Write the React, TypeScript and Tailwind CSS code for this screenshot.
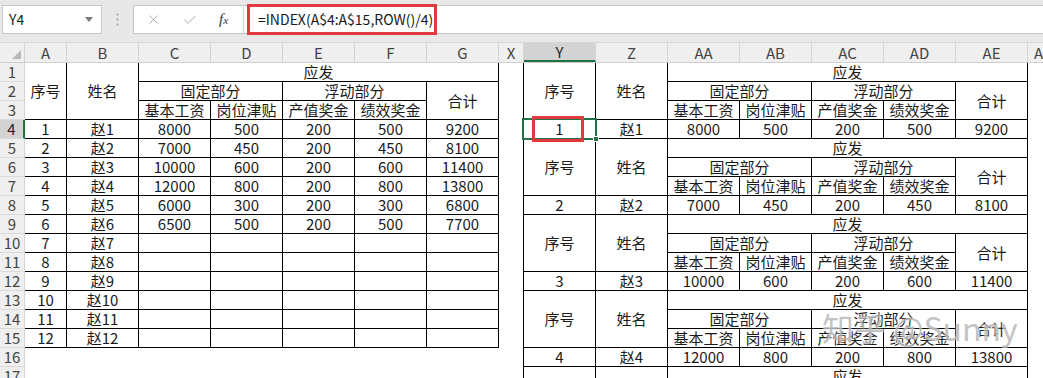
import { X, Check } from "lucide-react";

const FONT = "font-['Noto_Sans_CJK_SC','Noto_Sans',sans-serif]";

type Row = string[];

const DATA: Row[] = [
  ["1", "赵1", "8000", "500", "200", "500", "9200"],
  ["2", "赵2", "7000", "450", "200", "450", "8100"],
  ["3", "赵3", "10000", "600", "200", "600", "11400"],
  ["4", "赵4", "12000", "800", "200", "800", "13800"],
  ["5", "赵5", "6000", "300", "200", "300", "6800"],
  ["6", "赵6", "6500", "500", "200", "500", "7700"],
  ["7", "赵7"],
  ["8", "赵8"],
  ["9", "赵9"],
  ["10", "赵10"],
  ["11", "赵11"],
  ["12", "赵12"],
];

const COL_HEADS = [
  { label: "A", w: "w-[42px]" },
  { label: "B", w: "w-[72px]" },
  { label: "C", w: "w-[72px]" },
  { label: "D", w: "w-[72px]" },
  { label: "E", w: "w-[72px]" },
  { label: "F", w: "w-[72px]" },
  { label: "G", w: "w-[72px]" },
  { label: "X", w: "w-[25px]" },
  { label: "Y", w: "w-[72px]", sel: true },
  { label: "Z", w: "w-[72px]" },
  { label: "AA", w: "w-[72px]" },
  { label: "AB", w: "w-[72px]" },
  { label: "AC", w: "w-[72px]" },
  { label: "AD", w: "w-[72px]" },
  { label: "AE", w: "w-[72px]" },
];

function Cell({ className = "", children }: { className?: string; children?: React.ReactNode }) {
  return (
    <div className={`flex shrink-0 items-center justify-center border-r border-b border-black text-[15px] leading-[18px] text-[#1a1a1a] ${className}`}>
      {children}
    </div>
  );
}

function HeaderBlock({ first }: { first: string }) {
  return (
    <div className="flex">
      <Cell className={`${first} h-[57px]`}>序号</Cell>
      <Cell className="w-[72px] h-[57px]">姓名</Cell>
      <div className="flex flex-col">
        <Cell className="w-[360px] h-[19px]">应发</Cell>
        <div className="flex">
          <div className="flex flex-col">
            <Cell className="w-[144px] h-[19px]">固定部分</Cell>
            <div className="flex">
              <Cell className="w-[72px] h-[19px]">基本工资</Cell>
              <Cell className="w-[72px] h-[19px]">岗位津贴</Cell>
            </div>
          </div>
          <div className="flex flex-col">
            <Cell className="w-[144px] h-[19px]">浮动部分</Cell>
            <div className="flex">
              <Cell className="w-[72px] h-[19px]">产值奖金</Cell>
              <Cell className="w-[72px] h-[19px]">绩效奖金</Cell>
            </div>
          </div>
          <Cell className="w-[72px] h-[38px]">合计</Cell>
        </div>
      </div>
    </div>
  );
}

function DataRow({ row, first }: { row: Row; first: string }) {
  return (
    <div className="flex">
      <Cell className={`${first} h-[19px]`}>{row[0]}</Cell>
      {[1, 2, 3, 4, 5, 6].map((i) => (
        <Cell key={i} className="w-[72px] h-[19px]">{row[i] ?? ""}</Cell>
      ))}
    </div>
  );
}

function Toolbar() {
  return (
    <div className="h-[43px] bg-[#e8e8e8] pt-[5px] border-b border-[#d6d6d6]">
      <div className="flex h-[29px] items-stretch">
        <div className="ml-[2px] flex w-[100px] items-center justify-between border border-[#c6c6c6] bg-white pl-[6px] pr-[8px]">
          <span className="text-[14px] text-[#222]">Y4</span>
          <svg width="8" height="5" viewBox="0 0 8 5"><polygon points="0,0 8,0 4,5" fill="#7a7a7a" /></svg>
        </div>
        <div className="flex w-[31px] items-center justify-center">
          <svg width="3" height="13" viewBox="0 0 3 13">
            <circle cx="1.5" cy="1.5" r="1.2" fill="#b3b3b3" />
            <circle cx="1.5" cy="6.5" r="1.2" fill="#b3b3b3" />
            <circle cx="1.5" cy="11.5" r="1.2" fill="#b3b3b3" />
          </svg>
        </div>
        <div className="flex flex-1 items-center border border-r-0 border-[#c6c6c6] bg-white">
          <div className="flex w-[110px] items-center border-r border-[#d9d9d9] h-full">
            <X size={15} strokeWidth={1.4} className="ml-[12px] text-[#a3a3a3]" />
            <Check size={16} strokeWidth={1.4} className="ml-[21px] text-[#a3a3a3]" />
            <span className="ml-[21px] font-['Liberation_Serif',serif] text-[15px] italic text-[#333]">
              f<span className="text-[11px]">x</span>
            </span>
          </div>
          <div className="ml-[3px] -my-[3px] flex h-[31px] w-[190px] items-center border-[3px] border-[#e0393e] pl-[8px] text-[14px] text-[#1a1a1a]">
            =INDEX(A$4:A$15,ROW()/4)
          </div>
        </div>
      </div>
    </div>
  );
}

function ColumnHeader() {
  return (
    <div className="flex h-[20px] border-b border-[#cfcfcf] bg-[#efefef] text-[15px] leading-[18px] text-[#444]">
      <div className="flex w-[25px] shrink-0 items-end justify-end border-r border-[#d4d4d4] pb-[3px] pr-[3px]">
        <svg width="9" height="9" viewBox="0 0 9 9"><polygon points="9,0 9,9 0,9" fill="#b9b9b9" /></svg>
      </div>
      {COL_HEADS.map((c, i) => (
        <div
          key={i}
          className={`flex shrink-0 items-center justify-center border-r border-[#d4d4d4] ${c.w} ${c.sel ? "bg-[#d3d3d3] border-b-2 border-b-[#217346] text-[#222]" : ""}`}
        >
          {c.label}
        </div>
      ))}
      <div className="flex flex-1 items-center pl-[6px]">AF</div>
    </div>
  );
}

function RowHeader() {
  return (
    <div className="flex w-[25px] shrink-0 flex-col bg-[#efefef] text-[15px] leading-[18px] text-[#444]">
      {Array.from({ length: 17 }, (_, i) => (
        <div
          key={i}
          className={`flex h-[19px] shrink-0 items-center justify-center border-b border-[#dadada] ${i === 3 ? "bg-[#d3d3d3] border-r-2 border-r-[#217346] text-[#222]" : "border-r border-r-[#d4d4d4]"}`}
        >
          {i + 1}
        </div>
      ))}
    </div>
  );
}

export default function App() {
  return (
    <div className={`relative h-[378px] w-[1043px] overflow-hidden bg-white ${FONT}`}>
      <Toolbar />
      <ColumnHeader />
      <div className="flex">
        <RowHeader />

        {/* left source table */}
        <div className="flex w-[474px] shrink-0 flex-col">
          <HeaderBlock first="w-[42px]" />
          {DATA.map((r) => (
            <DataRow key={r[0]} row={r} first="w-[42px]" />
          ))}
        </div>

        <div className="w-[24px] shrink-0" />

        {/* right generated table */}
        <div className="flex w-[505px] shrink-0 flex-col border-l border-black">
          {DATA.slice(0, 4).map((r) => (
            <div key={r[0]} className="flex flex-col">
              <HeaderBlock first="w-[72px]" />
              <DataRow row={r} first="w-[72px]" />
            </div>
          ))}
          <HeaderBlock first="w-[72px]" />
        </div>
      </div>

      {/* active cell Y4 */}
      <div className="absolute left-[522px] top-[118px] h-[22px] w-[75px] border-2 border-[#217346]" />
      <div className="absolute left-[593px] top-[136px] h-[6px] w-[6px] border border-white bg-[#217346]" />
      <div className="absolute left-[532px] top-[116px] h-[26px] w-[52px] border-[3px] border-[#e0393e]" />

      {/* watermark */}
      <div className="pointer-events-none absolute left-[822px] top-[311px] whitespace-nowrap text-[32px] leading-none text-[#9a9a9a]/60 [text-shadow:0_0_2px_rgba(255,255,255,0.9)]">
        知乎 @Sunny
      </div>
    </div>
  );
}
